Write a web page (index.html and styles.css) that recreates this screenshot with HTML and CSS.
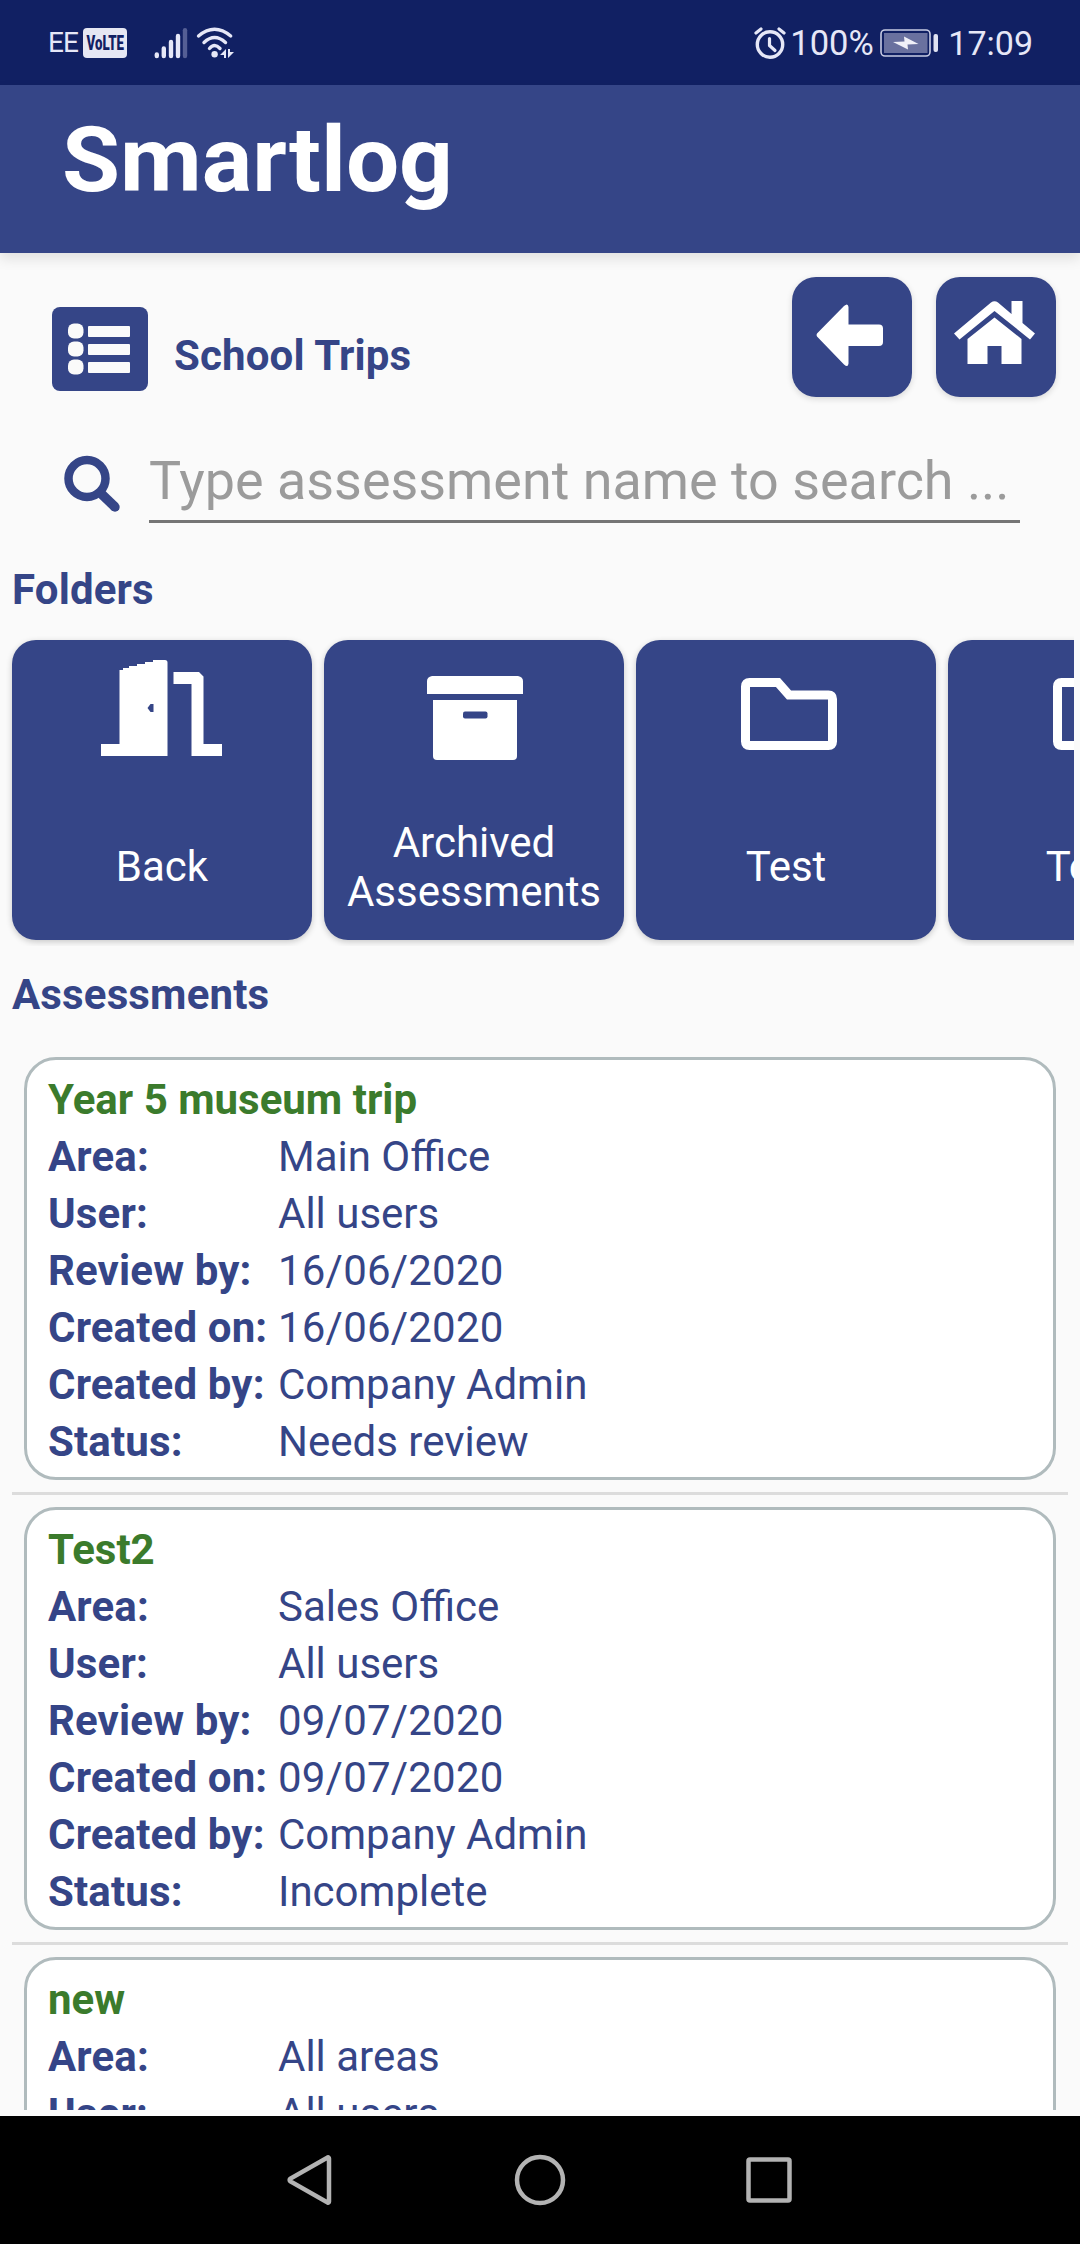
FILE: index.html
```html
<!DOCTYPE html>
<html lang="en">

<head>
    <meta charset="UTF-8">
    <meta name="viewport" content="width=device-width, initial-scale=1.0">
    <title>Smartlog - School Trips</title>
    <link rel="stylesheet" href="styles.css">
</head>

<body>
    <div class="status-bar">
        <div class="status-left">
            <span class="carrier">EE</span>
            <svg class="volte" width="44" height="30" viewBox="0 0 44 30">
                <rect width="44" height="30" rx="4" fill="#e6e7f3" />
                <text x="3.5" y="22" textLength="37.5" lengthAdjust="spacingAndGlyphs">VoLTE</text>
            </svg>
            <svg class="signal" width="34" height="32" viewBox="0 0 34 32">
                <g stroke="#e6e7f7" stroke-width="4.4" stroke-linecap="round">
                    <path d="M2.8 27.5v1.5M9.8 21.5v7.5M17 15v14M24 9v20" />
                    <path d="M31 3.2v25.8" stroke="#555f95" />
                </g>
            </svg>
            <svg class="wifi" width="38" height="32" viewBox="0 0 38 32">
                <g fill="none" stroke="#e6e7f7" stroke-width="3.4" stroke-linecap="round">
                    <path d="M2.500 9Q18.500-4.500 34.700 9" />
                    <path d="M8 15.500Q18.500 5.500 29.500 15.500" />
                    <path d="M13.500 21.500Q18.500 15.500 24 21.500" />
                </g>
                <circle cx="18.600" cy="27.200" r="3.200" fill="#e6e7f7" />
                <path d="M30 22v9h-2v-3h-4zM32 22v9l6-6h-4v-3z" fill="#e6e7f7" />
            </svg>
        </div>
        <div class="status-right">
            <svg width="32" height="32" viewBox="0 0 32 32" fill="none" stroke="#e6e7f7" stroke-linecap="round">
                <circle cx="16" cy="17.500" r="12.700" stroke-width="3.400" />
                <path d="M2 6l5-4M30 6l-5-4" stroke-width="3.200" />
                <path d="M15.500 11.500v7l5.500 5" stroke-width="3.200" stroke-linejoin="round" />
            </svg>
            <span class="percent">100%</span>
            <svg class="battery" width="59" height="28" viewBox="0 0 59 28">
                <rect x="1" y="1" width="49" height="26" rx="4" fill="none" stroke="#c8cbe3" stroke-width="1.600" />
                <rect x="4" y="4" width="43.500" height="20" fill="#6a719f" />
                <path d="M13 13l11.500-.5L24 7.500 38.500 15l-11 .5.5 5z" fill="#f0f0f8" />
                <rect x="53.500" y="5" width="4.500" height="18" rx="2" fill="#e0e2f2" />
            </svg>
            <span class="clock">17:09</span>
        </div>
    </div>

    <header class="app-header">
        <svg class="logo" width="400" height="120" viewBox="0 0 400 120">
            <text x="-2" y="90" textLength="391" lengthAdjust="spacingAndGlyphs">Smartlog</text>
        </svg>
    </header>

    <main class="content">
        <div class="title-row">
            <svg class="list-icon" width="96" height="84" viewBox="0 0 96 84">
                <rect width="96" height="84" rx="8" fill="#354587" />
                <g fill="#fafafa">
                    <rect x="16" y="16.500" width="15.500" height="15" rx="6" />
                    <rect x="16" y="34.500" width="15.500" height="15" rx="6" />
                    <rect x="16" y="52.500" width="15.500" height="15" rx="6" />
                    <rect x="36" y="19" width="42" height="11" rx="1" />
                    <rect x="36" y="37" width="42" height="11" rx="1" />
                    <rect x="36" y="55" width="42" height="11" rx="1" />
                </g>
            </svg>
            <h1>School Trips</h1>
            <button class="icon-btn" type="button" aria-label="Back">
                <svg width="120" height="120" viewBox="0 0 120 120" fill="#fff">
                    <path d="M25 56.500L52 29q4-3.500 4.500 1v17.500H87q4 0 4 4V65q0 4-4 4H56.500v17.500q-.5 4.500-4.500 1L25 59.500q-1-1.500 0-3z" />
                </svg>
            </button>
            <button class="icon-btn" type="button" aria-label="Home">
                <svg width="120" height="120" viewBox="0 0 120 120" fill="#fff">
                    <path d="M18 56.500L55 25.500q3.500-2.500 7 0L75.500 37V24h11v22L99 56.500 94 62.500 58.500 34 23.500 62.500z" />
                    <path d="M58.500 40.500L85.500 62v25H65.500V69h-14v18h-20V62z" />
                </svg>
            </button>
        </div>

        <div class="search-row">
            <svg width="58" height="58" viewBox="0 0 58 58">
                <circle cx="23" cy="23.500" r="18.500" fill="none" stroke="#354587" stroke-width="8.500" />
                <path d="M37.500 39L51 52" stroke="#354587" stroke-width="9.500" />
                <circle cx="51" cy="52" r="4.700" fill="#354587" />
            </svg>
            <input type="text" class="search" placeholder="Type assessment name to search ...">
        </div>

        <h2>Folders</h2>
        <div class="folders">
            <div class="folder">
                <svg class="door" width="121" height="96" viewBox="0 0 121 96" fill="#fff">
                    <path d="M0 84h18.500V10H22V8h6V6h8V4h8V2h8V0h12q2.500 0 2.500 2.500V96H0z" />
                    <path d="M72.500 12H98l4.500 4.500V84H121v12H90.500V24h-18z" />
                    <path d="M52.500 44v8h-3l-3-4 3-4z" fill="#354587" />
                </svg>
                <span>Back</span>
            </div>
            <div class="folder">
                <svg class="archive" width="96" height="84" viewBox="0 0 96 84" fill="#fff">
                    <path d="M5 0h86q5 1 5 5v13H0V5q0-4 5-5z" />
                    <path d="M6 24h84v56q0 4-4 4H10q-4 0-4-4z" />
                    <rect x="36" y="35.500" width="24.500" height="7" rx="2" fill="#354587" />
                </svg>
                <span class="two-lines">Archived Assessments</span>
            </div>
            <div class="folder">
                <svg class="closed" width="96" height="72" viewBox="0 0 96 72">
                    <path d="M4.500 8.500q0-4 4-4H37L48 17h39.500q4 0 4 4v42.500q0 4-4 4h-79q-4 0-4-4z" />
                </svg>
                <span>Test</span>
            </div>
            <div class="folder">
                <svg class="closed" width="96" height="72" viewBox="0 0 96 72">
                    <path d="M4.500 8.500q0-4 4-4H37L48 17h39.500q4 0 4 4v42.500q0 4-4 4h-79q-4 0-4-4z" />
                </svg>
                <span>Test2</span>
            </div>
        </div>

        <h2 class="assessments-title">Assessments</h2>
        <div class="assessments">
            <div class="assessment">
                <h3>Year 5 museum trip</h3>
                <dl>
                    <dt>Area:</dt><dd>Main Office</dd>
                    <dt>User:</dt><dd>All users</dd>
                    <dt>Review by:</dt><dd class="date">16/06/2020</dd>
                    <dt>Created on:</dt><dd class="date">16/06/2020</dd>
                    <dt>Created by:</dt><dd>Company Admin</dd>
                    <dt>Status:</dt><dd>Needs review</dd>
                </dl>
            </div>
            <hr>
            <div class="assessment">
                <h3>Test2</h3>
                <dl>
                    <dt>Area:</dt><dd>Sales Office</dd>
                    <dt>User:</dt><dd>All users</dd>
                    <dt>Review by:</dt><dd class="date">09/07/2020</dd>
                    <dt>Created on:</dt><dd class="date">09/07/2020</dd>
                    <dt>Created by:</dt><dd>Company Admin</dd>
                    <dt>Status:</dt><dd>Incomplete</dd>
                </dl>
            </div>
            <hr>
            <div class="assessment">
                <h3>new</h3>
                <dl>
                    <dt>Area:</dt><dd>All areas</dd>
                    <dt>User:</dt><dd>All users</dd>
                </dl>
            </div>
        </div>
    </main>

    <nav class="nav-bar">
        <svg width="52" height="52" viewBox="0 0 52 52">
            <path d="M42.500 3.500q1.500-.5 1.500 1v43q0 1.500-1.500 1L5.500 27.500q-1.800-1.500 0-3z" />
        </svg>
        <svg width="52" height="52" viewBox="0 0 52 52">
            <circle cx="26" cy="26" r="23" />
        </svg>
        <svg width="52" height="52" viewBox="0 0 52 52">
            <rect x="5.500" y="5.500" width="41" height="41" rx="1.500" />
        </svg>
    </nav>
</body>

</html>
```

FILE: styles.css
```css
/* Resetting Default Styles */
* {
    margin: 0;
    padding: 0;
    box-sizing: border-box;
}

body {
    font-family: Roboto, "Liberation Sans", sans-serif;
    background-color: #fafafa;
    color: #354587;
    font-size: 42px;
    width: 1080px;
    height: 2244px;
    display: flex;
    flex-direction: column;
    overflow: hidden;
}

svg {
    display: block;
    flex: none;
    overflow: visible;
}

/* Phone status bar */
.status-bar {
    height: 85px;
    flex: none;
    background-color: #112063;
    color: #e6e7f7;
    display: flex;
    justify-content: space-between;
    align-items: center;
    padding: 0 47px 0 48px;
}

.status-left,
.status-right {
    display: flex;
    align-items: center;
}

.carrier {
    font-size: 28px;
    letter-spacing: -1px;
    width: 35px;
}

.volte text {
    font-size: 20px;
    font-weight: 900;
    fill: #112063;
}

.signal {
    margin-left: 27px;
}

.wifi {
    margin-left: 8px;
}

.percent {
    font-size: 34.5px;
    margin-left: 4px;
    width: 90px;
}

.battery {
    margin-right: 9px;
}

.clock {
    font-size: 34px;
}

/* App header */
.app-header {
    height: 168px;
    flex: none;
    background-color: #354587;
    padding: 16px 0 0 64px;
    box-shadow: 0 6px 12px rgba(0, 0, 0, 0.1);
}

.logo text {
    font-size: 91px;
    font-weight: 700;
    fill: #fff;
}

.content {
    height: 1857px;
    flex: none;
    overflow: hidden;
    padding-top: 24px;
}

.title-row {
    display: flex;
    align-items: flex-start;
    gap: 24px;
    height: 120px;
    padding: 0 24px 0 52px;
}

.list-icon {
    margin-top: 30px;
}

h1,
h2,
h3,
dt {
    font-size: 42px;
    font-weight: bold;
    letter-spacing: 0.15px;
}

h1 {
    line-height: 49px;
    flex: 1;
    padding: 54px 0 0 2px;
}

.icon-btn {
    width: 120px;
    height: 120px;
    border: none;
    border-radius: 24px;
    background-color: #354587;
    box-shadow: 0 2px 6px rgba(0, 0, 0, 0.14);
}

/* Search */
.search-row {
    display: flex;
    align-items: center;
    gap: 27px;
    height: 84px;
    margin-top: 42px;
    padding: 6px 60px 0 64px;
}

.search {
    flex: 1;
    height: 78px;
    border: none;
    border-bottom: 3px solid #757575;
    padding-bottom: 4px;
    background: none;
    font-family: inherit;
    font-size: 53.9px;
    outline: none;
}

.search::placeholder {
    color: #9b9b9b;
    opacity: 1;
}

h2 {
    line-height: 49px;
    padding-left: 12px;
    margin-top: 42px;
}

/* Folder tiles */
.folders {
    display: flex;
    gap: 12px;
    margin: 14px 6px 0 0;
    padding: 12px 0 6px 12px;
    overflow: hidden;
}

.folder {
    width: 300px;
    height: 300px;
    flex: none;
    display: flex;
    flex-direction: column;
    align-items: center;
    justify-content: space-between;
    padding: 20px 10px 24px;
    border-radius: 24px;
    background-color: #354587;
    color: #fff;
    box-shadow: 0 2px 6px rgba(0, 0, 0, 0.2);
}

.folder span {
    height: 98px;
    line-height: 49px;
    display: flex;
    align-items: center;
    text-align: center;
    padding-bottom: 2px;
}

.folder .two-lines {
    padding-bottom: 0;
}

.folder .door {
    margin-right: 2px;
}

.folder .archive {
    margin: 16px 0 0 2px;
}

.folder .closed {
    margin: 18px 0 0 6px;
    fill: none;
    stroke: #fff;
    stroke-width: 9;
}

/* Assessment list */
.assessments-title {
    margin-top: 24px;
}

.assessments {
    margin-top: 38px;
    padding: 0 12px;
}

.assessment {
    height: 423px;
    margin: 0 12px;
    padding: 11px 21px 7px;
    border: 3px solid #b0bbbd;
    border-radius: 32px;
    background-color: #fff;
    line-height: 57px;
}

.assessment h3 {
    color: #3b7b2c;
    letter-spacing: 0;
}

dl {
    display: grid;
    grid-template-columns: 230px 1fr;
}

dt {
    white-space: nowrap;
}

.date {
    letter-spacing: 0.2px;
}

hr {
    height: 3px;
    margin: 12px 0;
    border: none;
    background-color: #dcdcdc;
}

/* Android navigation buttons */
.nav-bar {
    height: 128px;
    flex: none;
    margin-top: auto;
    background-color: #000;
    display: flex;
    justify-content: center;
    align-items: center;
    gap: 177px;
}

.nav-bar svg {
    fill: none;
    stroke: #b3b3b3;
    stroke-width: 4.5;
}
```
